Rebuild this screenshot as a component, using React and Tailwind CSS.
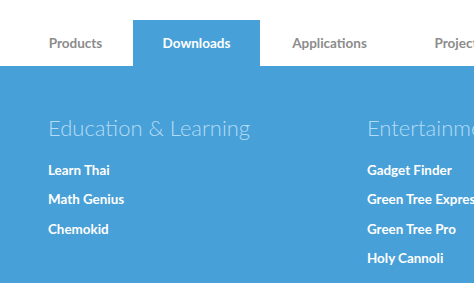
const tabs = [
  { label: "Products", width: "w-[115px]" },
  { label: "Downloads", width: "w-[127px]", active: true },
  { label: "Applications", width: "w-[139px]" },
  { label: "Projects", width: "w-[120px]" },
];

const columns = [
  {
    title: "Education & Learning",
    items: ["Learn Thai", "Math Genius", "Chemokid"],
  },
  {
    title: "Entertainment",
    items: ["Gadget Finder", "Green Tree Express", "Green Tree Pro", "Holy Cannoli"],
  },
];

export default function App() {
  return (
    <div className="w-[474px] h-[283px] overflow-hidden bg-white font-['Lato',sans-serif]">
      <nav className="flex pt-[20px] pl-[18px] whitespace-nowrap">
        {tabs.map((tab) => (
          <div
            key={tab.label}
            className={
              tab.active
                ? `${tab.width} shrink-0 h-[46px] flex items-center justify-center text-[13.5px] font-bold text-white bg-[#48a0d8]`
                : `${tab.width} shrink-0 h-[46px] flex items-center justify-center text-[13.5px] font-bold text-[#8c8c8c]`
            }
          >
            {tab.label}
          </div>
        ))}
      </nav>
      <div className="h-[217px] bg-[#48a0d8] flex pl-[48px] pt-[48px] whitespace-nowrap">
        {columns.map((col) => (
          <div key={col.title} className="w-[319px] shrink-0">
            <h2 className="text-[22px] font-light leading-[28px] text-[#b3dcf6]">{col.title}</h2>
            <ul className="mt-[20px] flex flex-col">
              {col.items.map((item) => (
                <li key={item} className="h-[29.3px] text-[13.4px] font-bold text-white leading-[16px]">
                  {item}
                </li>
              ))}
            </ul>
          </div>
        ))}
      </div>
    </div>
  );
}
